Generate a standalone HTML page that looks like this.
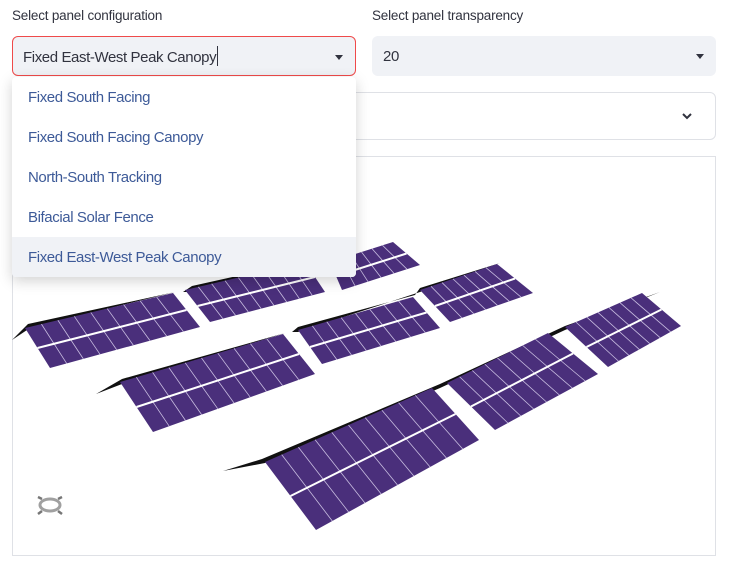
<!DOCTYPE html>
<html><head><meta charset="utf-8"><style>
body{margin:0;width:730px;height:565px;background:#fff;font-family:"Liberation Sans",sans-serif;position:relative;overflow:hidden}
.lbl{position:absolute;top:8px;font-size:13.5px;color:#31333f;letter-spacing:-0.2px}
.sel{position:absolute;top:36px;height:40px;box-sizing:border-box;background:#f0f2f6;border-radius:6px;font-size:15px;color:#31333f;line-height:41px;letter-spacing:-0.4px}
.caret{position:absolute;right:12px;top:18px;width:0;height:0;border-left:4px solid transparent;border-right:4px solid transparent;border-top:5px solid #31333f}
.menu{position:absolute;left:12px;top:77px;width:344px;height:200px;background:#fff;border-radius:4px;box-shadow:0 4px 14px rgba(0,0,0,.18);z-index:5;overflow:hidden}
.it{height:40px;line-height:42px;padding-left:16px;font-size:15px;color:#3d5a98;letter-spacing:-0.4px}
</style></head><body>
<div class="lbl" style="left:12px">Select panel configuration</div>
<div class="lbl" style="left:372px">Select panel transparency</div>
<div class="sel" style="left:12px;width:344px;border:1px solid #ef4a4a;padding-left:10px">Fixed East-West Peak Canopy<span style="display:inline-block;width:1px;height:20px;background:#31333f;vertical-align:-4px;margin-left:1px"></span><div class="caret"></div></div>
<div class="sel" style="left:372px;width:344px;padding-left:11px">20<div class="caret"></div></div>
<div style="position:absolute;left:340px;top:92px;width:376px;height:48px;box-sizing:border-box;border:1px solid #dfe1e6;border-radius:6px">
<svg style="position:absolute;right:22px;top:18px" width="12" height="10"><path d="M2 3 L6 7 L10 3" stroke="#31333f" stroke-width="2" fill="none"/></svg></div>
<div style="position:absolute;left:12px;top:156px;width:704px;height:400px;box-sizing:border-box;border:1px solid #dfe1e6"></div>
<svg id="s" style="position:absolute;left:0;top:0" width="730" height="565"></svg>
<div class="menu">
<div class="it">Fixed South Facing</div>
<div class="it">Fixed South Facing Canopy</div>
<div class="it">North-South Tracking</div>
<div class="it">Bifacial Solar Fence</div>
<div class="it" style="background:#f0f2f6">Fixed East-West Peak Canopy</div>
</div>
<script>
var P=[
[[25,328],[173,293],[200,327],[50,368],9],
[[185,290],[305,262],[325,292],[210,322],9],
[[330,262],[393,242],[420,265],[342,290],6],
[[120,382],[283,334],[315,374],[153,432],10],
[[298,330],[413,297],[440,328],[322,364],8],
[[420,290],[497,264],[533,293],[450,322],7],
[[265,462],[432,388],[479,440],[316,530],10],
[[447,383],[548,333],[598,374],[495,430],8],
[[565,327],[642,293],[681,326],[608,367],7]];
var h='';
h+='<path d="M12 340 L28 324 L175 292 L30 328 Z" fill="#111"/>';
h+='<path d="M183 292 L192 286 L300 262 L190 292 Z" fill="#111"/>';
h+='<path d="M96 394 L122 379 L285 333 L122 384 Z" fill="#111"/>';
h+='<path d="M292 332 L298 327 L415 295 L420 288 L500 263 L420 292 L298 332 Z" fill="#111"/>';
h+='<path d="M223 471 L262 459 L440 384 L565 326 L660 292 L565 330 L440 388 L265 463 Z" fill="#111"/>';
function L(a,b,t){return [a[0]+(b[0]-a[0])*t,a[1]+(b[1]-a[1])*t]}
P.forEach(function(q){var a=q[0],b=q[1],c=q[2],d=q[3],n=q[4];
h+='<polygon points="'+[a,b,c,d].map(function(p){return p.join(',')}).join(' ')+'" fill="#4a2f7b"/>';
for(var i=1;i<n;i++){var t=i/n,p1=L(a,b,t),p2=L(d,c,t);h+='<line x1="'+p1[0]+'" y1="'+p1[1]+'" x2="'+p2[0]+'" y2="'+p2[1]+'" stroke="#c8bde0" stroke-width="0.8"/>';}
var m1=L(a,d,.5),m2=L(b,c,.5);h+='<line x1="'+m1[0]+'" y1="'+m1[1]+'" x2="'+m2[0]+'" y2="'+m2[1]+'" stroke="#fff" stroke-width="2"/>';});
h+='<ellipse cx="50" cy="505" rx="10" ry="6" fill="none" stroke="#888" stroke-width="3" opacity=".8"/>';
h+='<path d="M38 497 L42 499 M62 497 L58 499 M38 514 L42 511 M62 514 L58 511" stroke="#777" stroke-width="2.5"/>';
document.getElementById('s').innerHTML=h;
</script>
</body></html>
